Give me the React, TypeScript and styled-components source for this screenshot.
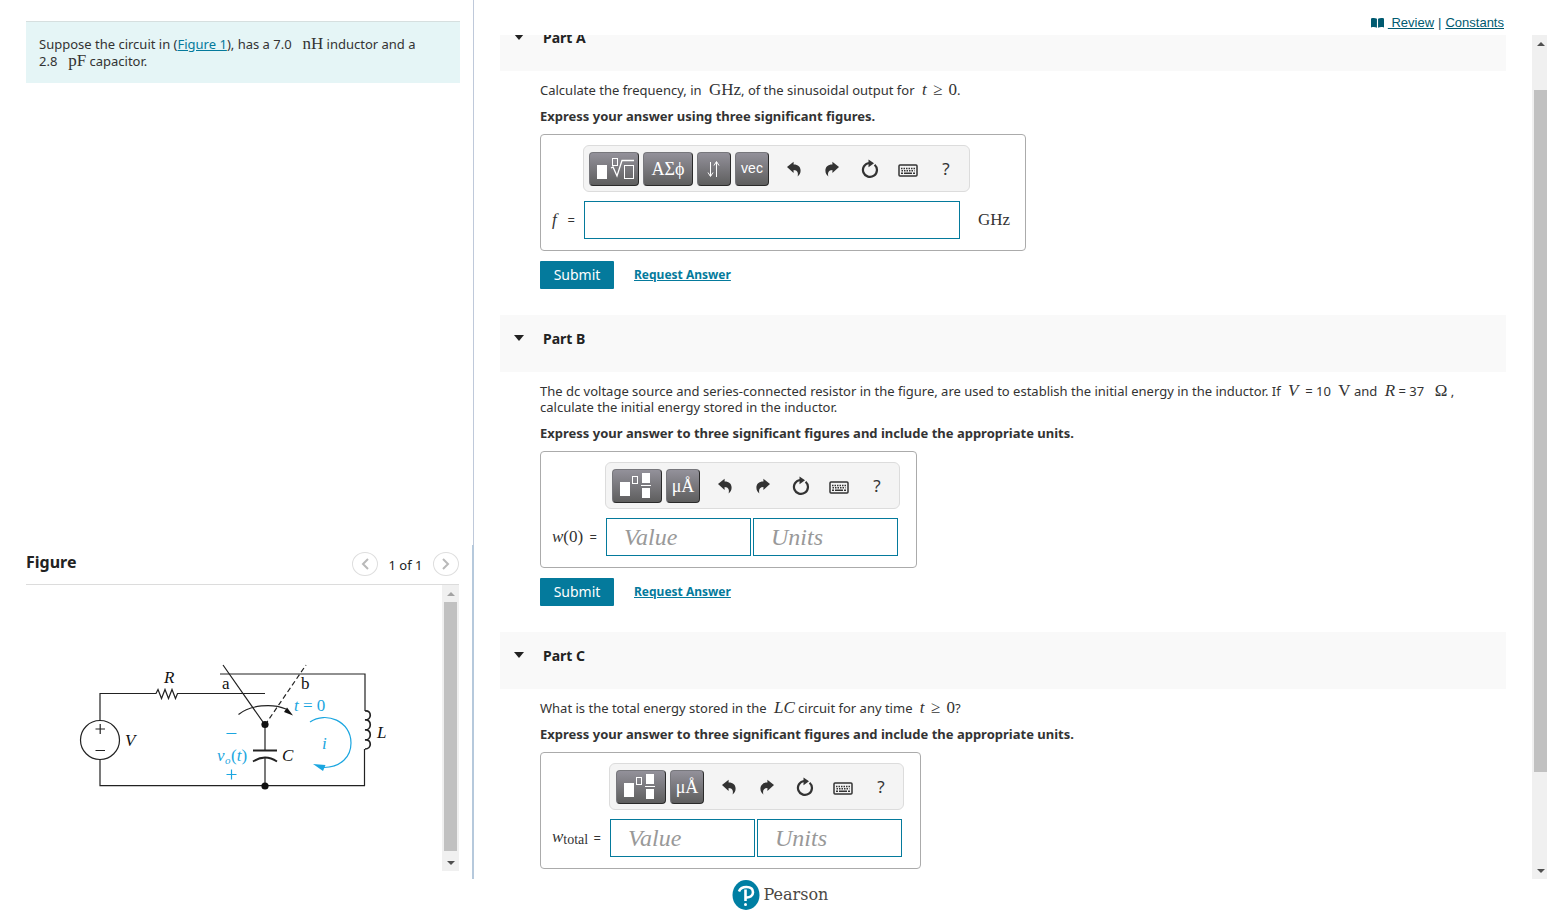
import React from 'react';
import styled, { createGlobalStyle, css } from 'styled-components';

const sans = '"Noto Sans", "Open Sans", sans-serif';
const serif = '"Liberation Serif", "Times New Roman", serif';
const teal = '#047a9c';

const GlobalStyle = createGlobalStyle`
  *, *::before, *::after { box-sizing: border-box; }
  body { margin: 0; background: #fff; color: #333; font: 13px/16px ${sans}; }
  p { margin: 0; }
  button { font-family: inherit; cursor: pointer; }
  a { color: ${teal}; }
`;

const Page = styled.div`
  display: grid;
  grid-template-rows: minmax(0, 1fr) 41px;
  height: 100vh;
  overflow: hidden;
`;

const Columns = styled.div`
  display: grid;
  grid-template-columns: minmax(0, 474fr) minmax(0, 1073fr);
  min-height: 0;
`;

const Sidebar = styled.aside`
  display: flex;
  flex-direction: column;
  min-height: 0;
`;

const Prompt = styled.section`
  flex: 1;
  min-height: 0;
  padding: 21px 13px 0 26px;
  border-right: 1px solid #bfc9da;
`;

const PromptCard = styled.div`
  padding: 14px 13px 13px;
  border-top: 1px solid #d6dfdf;
  background: #e5f5f6;
  line-height: 17px;
`;

const FigurePane = styled.section`
  display: flex;
  flex-direction: column;
  height: 334px;
  padding: 0 13px 8px 26px;
  border-right: 2px solid #b6c9dc;
`;

const FigureBar = styled.header`
  display: flex;
  align-items: center;
  justify-content: space-between;
  height: 40px;
  border-bottom: 1px solid #dcdcdc;
`;

const FigureTitle = styled.h2`
  margin: 0;
  padding-bottom: 6px;
  color: #222;
  font-size: 16px;
  line-height: 20px;
`;

const Pager = styled.nav`
  display: flex;
  align-items: center;
  gap: 10px;
  padding-bottom: 2px;
  color: #222;
  font-size: 13px;

  span {
    min-width: 35px;
    padding-top: 2px;
    text-align: center;
  }
`;

const PagerButton = styled.button`
  display: grid;
  place-items: center;
  width: 26px;
  height: 24px;
  padding: 0;
  border: 1px solid #dedede;
  border-radius: 50%;
  background: #fff;
`;

const FigureBody = styled.div`
  display: flex;
  flex: 1;
  min-height: 0;
`;

const FigureView = styled.div`
  flex: 1;
  min-width: 0;
  overflow: hidden;
  padding: 65px 0 0 34px;
`;

const ScrollTrack = styled.div<{ $clipped?: boolean }>`
  display: flex;
  flex: none;
  flex-direction: column;
  width: ${p => (p.$clipped ? 15 : 17)}px;
  padding: 0 ${p => (p.$clipped ? 0 : 2)}px 0 2px;
  background: #f0f0f0;
`;

const ScrollArrow = styled.span<{ $down?: boolean; $muted?: boolean }>`
  display: grid;
  flex: none;
  place-items: center;
  height: 17px;

  &::before {
    content: '';
    border: 4px solid transparent;
    ${p => p.$down
      ? css`border-top-color: #505050; border-bottom: 0;`
      : css`border-bottom-color: ${p.$muted ? '#a3a3a3' : '#505050'}; border-top: 0;`}
  }
`;

const ScrollThumb = styled.span<{ $before: number; $size: number; $after: number }>`
  display: grid;
  flex: 1;
  grid-template-rows: ${p => `${p.$before}fr ${p.$size}fr ${p.$after}fr`};

  &::before {
    content: '';
    grid-row: 2;
    background: #c1c1c1;
  }
`;

const Main = styled.main`
  display: grid;
  grid-template-rows: 35px minmax(0, 1fr);
  min-height: 0;
`;

const TopLinks = styled.nav`
  display: flex;
  align-items: center;
  justify-content: flex-end;
  gap: 4px;
  padding: 11px 43px 0 0;
  color: #005a70;
  font-family: "Liberation Sans", Arial, sans-serif;

  a { color: inherit; white-space: pre; }
`;

const MainScroller = styled.div`
  display: flex;
  min-height: 0;
`;

const Parts = styled.div`
  flex: 1;
  min-width: 0;
  overflow: hidden;
  padding: 0 26px;
`;

const PartList = styled.div`
  margin-top: -21px;
`;

const PartHeader = styled.header`
  display: flex;
  align-items: center;
  gap: 19px;
  height: 57px;
  padding: 0 14px;
  background: #f9f9f9;

  h2 {
    margin: 0;
    padding-bottom: 10px;
    color: #222;
    font-size: 14px;
    line-height: 18px;
  }
`;

const Toggle = styled.button`
  display: grid;
  place-items: center;
  width: 10px;
  height: 18px;
  margin-bottom: 12px;
  padding: 0;
  border: 0;
  background: none;

  &::before {
    content: '';
    border: 5px solid transparent;
    border-top: 6px solid #222;
    border-bottom: 0;
  }
`;

const PartBody = styled.div`
  display: flex;
  flex-direction: column;
  align-items: flex-start;
  gap: 10px;
  padding: 11px 26px 26px 40px;
`;

const Instruction = styled.p`
  font-weight: 700;
`;

const Math = styled.span<{ $italic?: boolean }>`
  font-family: ${serif};
  font-size: 17px;
  font-style: ${p => (p.$italic ? 'italic' : 'normal')};
  line-height: 0;

  p > & { margin-left: 4px; }

  sub { font-size: 14px; font-style: normal; vertical-align: -2px; line-height: 0; }
`;

const Relation = styled.span`
  margin: 0 2px;
`;

const AnswerBox = styled.div<{ $label: number }>`
  display: inline-grid;
  grid-template-columns: ${p => p.$label}px auto;
  row-gap: 9px;
  padding: 10px 16px 11px 11px;
  border: 1px solid #ababab;
  border-radius: 4px;
`;

const Toolbar = styled.div<{ $inset: number }>`
  display: flex;
  grid-column: 2;
  align-items: center;
  justify-self: start;
  gap: 4px;
  height: 47px;
  padding: 0 ${p => 9 - p.$inset}px 0 ${p => p.$inset}px;
  border: 1px solid #dcdcdc;
  border-radius: 6px;
  background: #f4f4f4;
`;

const KeyButton = styled.button<{ $wide?: boolean }>`
  display: grid;
  place-items: center;
  width: ${p => (p.$wide ? 50 : 34)}px;
  height: 34px;
  padding: 0;
  border: 1px solid #2a2a2a;
  border-top-color: #77777c;
  border-left-color: #77777c;
  border-radius: 4px;
  background: linear-gradient(#93919a, #5e5e5e);
  color: #fff;
  font: 18px/20px ${serif};
`;

const VecText = styled.span`
  padding-bottom: 2px;
  font: 14px/16px "Liberation Sans", Arial, sans-serif;
`;

const IconGroup = styled.div`
  display: flex;
  padding-left: 2px;
`;

const IconButton = styled.button`
  display: grid;
  place-items: center;
  width: 38px;
  height: 34px;
  padding: 0;
  border: 0;
  background: none;
  color: #333;
  font-size: 17px;
  line-height: 20px;
`;

const FieldLabel = styled.label`
  display: flex;
  align-items: center;
  align-self: center;
  justify-content: space-between;
  padding-right: 8px;
  white-space: nowrap;
`;

const Fields = styled.div`
  display: flex;
  align-items: center;
  gap: 2px;
  padding-left: 1px;
`;

const Field = styled.input<{ $width: number }>`
  width: ${p => p.$width}px;
  height: 38px;
  padding: 0 17px;
  border: 1px solid ${teal};
  border-radius: 0;
  background: #fff;
  color: #333;
  font: italic 24px/28px ${serif};

  &::placeholder { color: #999; opacity: 1; }
`;

const Unit = styled.span`
  width: 47px;
  padding-left: 16px;
`;

const Actions = styled.div`
  display: flex;
  align-items: center;
  gap: 20px;

  a { font-size: 12px; font-weight: 700; }
`;

const Submit = styled.button`
  width: 74px;
  height: 28px;
  padding: 0;
  border: 0;
  border-radius: 1px;
  background: ${teal};
  color: #fff;
  font-size: 14px;
  line-height: 20px;
`;

const Footer = styled.footer`
  display: flex;
  align-items: center;
  justify-content: center;
  gap: 4px;
  padding: 0 0 9px 13px;
  color: #4b4844;
  font: 16px/22px "DejaVu Serif", serif;
`;

const Chevron = ({ right }: { right?: boolean }) => (
  <svg width="10" height="12" viewBox="0 0 10 12" fill="none" stroke="#b9b9b9" strokeWidth="2">
    <path d={right ? 'M2 1l5 5-5 5' : 'M8 1L3 6l5 5'} />
  </svg>
);

const CurvedArrow = ({ redo }: { redo?: boolean }) => (
  <svg width="14" height="16" viewBox="0 0 14 16" fill="#333">
    <g transform={redo ? 'matrix(-1 0 0 1 14 0)' : undefined}>
      <path d="M0 6L6.6.8v2.8c4.600 0 7 2.400 7 6.200 0 2.300-1.200 4.300-3 5.800 1-3.400 0-6.400-4-6.500v3z" />
    </g>
  </svg>
);

const ResetIcon = () => (
  <svg width="18" height="20" viewBox="0 0 18 20" fill="none">
    <path d="M13.600 5.700A7 7 0 1 1 8 4" stroke="#333" strokeWidth="2.200" />
    <path d="M7.500.5L13 4.200 7.500 8.200z" fill="#333" />
  </svg>
);

const KeyboardIcon = () => (
  <svg width="20" height="18" viewBox="0 0 20 18" fill="none" stroke="#333">
    <rect x="1" y="5" width="18" height="11" rx="1" strokeWidth="1.500" />
    <path d="M3 8.500h14M3.500 10.800h13" strokeWidth="1.500" strokeDasharray="1.500 1" />
    <path d="M3 13.300h2m1 0h8m1 0h2" strokeWidth="1.500" />
  </svg>
);

const RootIcon = () => (
  <svg width="48" height="32" viewBox="0 0 48 32" fill="none" stroke="#fff">
    <path d="M7 12h10v14H7z" fill="#fff" stroke="none" />
    <rect x="22.500" y="5.500" width="5" height="7" />
    <path d="M21 15l2-1 4 9 5-15.500h12" strokeWidth="1.300" />
    <rect x="34.500" y="12.500" width="9" height="13" />
  </svg>
);

const FractionIcon = () => (
  <svg width="48" height="32" viewBox="0 0 48 32" fill="#fff">
    <path d="M7 12h10v14H7zM29 3h8v10h-8zM29 18h8v10h-8zM28 15h10v1H28z" />
    <rect x="19.500" y="6.500" width="5" height="7" fill="none" stroke="#fff" />
  </svg>
);

const ArrowsIcon = () => (
  <svg width="16" height="20" viewBox="0 0 16 20" fill="none" stroke="#fff">
    <path d="M4.500 3v14M2 13.500l2.500 4 2.500-4M10.500 18V3M8 6.500l2.500-4 2.500 4" />
  </svg>
);

const BookIcon = () => (
  <svg width="13" height="10" viewBox="0 0 14 10" preserveAspectRatio="none" fill="#005a70">
    <path d="M0 .5C2.200-.2 4.500-.1 6.400.7v9C4.500 8.900 2.200 8.800 0 9.500zM14 .5C11.800-.2 9.500-.1 7.600.7v9c1.900-.8 4.200-.9 6.400-.2z" />
  </svg>
);

const PearsonMark = () => (
  <svg width="28" height="30" viewBox="0 0 28 30" fill="none">
    <ellipse cx="14" cy="15" rx="13.500" ry="15" fill="#007fa3" />
    <path d="M7 11.500C8 8.500 10.500 7 14.500 7c4 0 6.500 2 6.500 5.200 0 3.500-3 5.700-7 5.300M13.500 9.500v11.500" stroke="#fff" strokeWidth="2.600" />
    <circle cx="13.500" cy="24.500" r="1.500" fill="#fff" />
  </svg>
);

const DiagramText = styled.text<{ $italic?: boolean; $blue?: boolean; $small?: boolean }>`
  fill: ${p => (p.$blue ? '#1ba6e0' : '#111')};
  font-family: ${serif};
  font-size: ${p => (p.$small ? 11 : 17)}px;
  font-style: ${p => (p.$italic ? 'italic' : 'normal')};
`;

const Circuit = () => (
  <svg width="350" height="150" viewBox="60 650 350 150" role="img" aria-label="Switched LC circuit">
    <g fill="none" stroke="#222" strokeWidth="1.200">
      <circle cx="100" cy="740" r="19.500" />
      <path d="M100 720.500V693.500H156l2-4 3.500 9 3.500-9 3.500 9 3.500-9 3.500 9 2-5H265" />
      <path d="M100 759.500V785.700H364.500V749" />
      <path d="M220 674H365V711" />
      <path d="M365 711c7-1 7 9 0 9 7-1 7 10 0 10 7-1 7 10 0 10 7-1 7 9 0 9" strokeWidth="1.700" />
      <path d="M223 665L265 725V750.500M265 757.500V786" />
      <path d="M265 725L306 665" strokeDasharray="5 3" />
      <path d="M238.500 714.500C250 705 272 703 286 709" />
      <path d="M95.500 729H105M100.200 724V734M95.500 750.500H105" />
      <path d="M253 750.500H277M253 761.500Q265 753.500 277 761.500" strokeWidth="1.800" />
    </g>
    <g fill="#111">
      <circle cx="265" cy="724.500" r="3.600" />
      <circle cx="265" cy="786" r="3.600" />
      <path d="M293 715.500L284 712 287 707.500z" />
    </g>
    <g fill="none" stroke="#1ba6e0" strokeWidth="1.200">
      <path d="M310 722C326 711 351 721 351 743 351 757 341 767 324 767.500" />
      <path d="M226.500 733.500H236.500M226.500 774.500H236.500M231.500 769.500V779.500" />
    </g>
    <path d="M313 764L325.500 765 323 771z" fill="#1ba6e0" />
    <DiagramText x="164" y="683" $italic>R</DiagramText>
    <DiagramText x="125" y="746" $italic>V</DiagramText>
    <DiagramText x="222" y="689">a</DiagramText>
    <DiagramText x="301" y="689">b</DiagramText>
    <DiagramText x="282" y="761" $italic>C</DiagramText>
    <DiagramText x="377" y="738" $italic>L</DiagramText>
    <DiagramText x="322" y="749" $italic $blue>i</DiagramText>
    <DiagramText x="294" y="711" $blue><tspan fontStyle="italic">t</tspan> = 0</DiagramText>
    <DiagramText x="217" y="761" $italic $blue>v</DiagramText>
    <DiagramText x="225" y="764" $italic $blue $small>o</DiagramText>
    <DiagramText x="231" y="761" $blue>(<tspan fontStyle="italic">t</tspan>)</DiagramText>
  </svg>
);

const EditIcons = () => (
  <IconGroup>
    <IconButton type="button" aria-label="Undo"><CurvedArrow /></IconButton>
    <IconButton type="button" aria-label="Redo"><CurvedArrow redo /></IconButton>
    <IconButton type="button" aria-label="Reset"><ResetIcon /></IconButton>
    <IconButton type="button" aria-label="Keyboard shortcuts"><KeyboardIcon /></IconButton>
    <IconButton type="button" aria-label="Help">?</IconButton>
  </IconGroup>
);

const PartActions = () => (
  <Actions>
    <Submit type="submit">Submit</Submit>
    <a href="#request">Request Answer</a>
  </Actions>
);

const Part = ({ name, children }: { name: string; children: React.ReactNode }) => (
  <section>
    <PartHeader>
      <Toggle type="button" aria-label={`Collapse ${name}`} />
      <h2>{name}</h2>
    </PartHeader>
    <PartBody>{children}</PartBody>
  </section>
);

const AfterZero = () => (
  <Math><i>t</i> <Relation>≥</Relation> 0</Math>
);

const ValueUnitsAnswer = ({ id, labelWidth, label }: { id: string; labelWidth: number; label: React.ReactNode }) => (
  <AnswerBox $label={labelWidth}>
    <Toolbar $inset={6}>
      <KeyButton type="button" $wide aria-label="Templates"><FractionIcon /></KeyButton>
      <KeyButton type="button">μÅ</KeyButton>
      <EditIcons />
    </Toolbar>
    <FieldLabel htmlFor={id}>{label}<span>=</span></FieldLabel>
    <Fields>
      <Field id={id} $width={145} placeholder="Value" />
      <Field $width={145} placeholder="Units" aria-label="Units" />
    </Fields>
  </AnswerBox>
);

export default function App() {
  return (
    <>
      <GlobalStyle />
      <Page>
        <Columns>
          <Sidebar>
            <Prompt>
              <PromptCard>
                <p>
                  Suppose the circuit in (<a href="#figure">Figure 1</a>), has a 7.0 &nbsp;<Math>nH</Math> inductor
                  and a
                  <br />
                  2.8 &nbsp;<Math>pF</Math> capacitor.
                </p>
              </PromptCard>
            </Prompt>
            <FigurePane id="figure">
              <FigureBar>
                <FigureTitle>Figure</FigureTitle>
                <Pager>
                  <PagerButton type="button" aria-label="Previous"><Chevron /></PagerButton>
                  <span>1 of 1</span>
                  <PagerButton type="button" aria-label="Next"><Chevron right /></PagerButton>
                </Pager>
              </FigureBar>
              <FigureBody>
                <FigureView><Circuit /></FigureView>
                <ScrollTrack aria-hidden>
                  <ScrollArrow $muted />
                  <ScrollThumb $before={0} $size={249} $after={3} />
                  <ScrollArrow $down />
                </ScrollTrack>
              </FigureBody>
            </FigurePane>
          </Sidebar>

          <Main>
            <TopLinks>
              <BookIcon />
              <a href="#review"> Review</a>
              <span>|</span>
              <a href="#constants">Constants</a>
            </TopLinks>
            <MainScroller>
              <Parts>
                <PartList>
                  <Part name="Part A">
                    <p>
                      Calculate the frequency, in <Math>GHz</Math>, of the sinusoidal output for <AfterZero />.
                    </p>
                    <Instruction>Express your answer using three significant figures.</Instruction>
                    <AnswerBox $label={31}>
                      <Toolbar $inset={5}>
                        <KeyButton type="button" $wide aria-label="Templates"><RootIcon /></KeyButton>
                        <KeyButton type="button" $wide>ΑΣϕ</KeyButton>
                        <KeyButton type="button" aria-label="Arrows"><ArrowsIcon /></KeyButton>
                        <KeyButton type="button"><VecText>vec</VecText></KeyButton>
                        <EditIcons />
                      </Toolbar>
                      <FieldLabel htmlFor="frequency"><Math $italic>f</Math><span>=</span></FieldLabel>
                      <Fields>
                        <Field id="frequency" $width={376} />
                        <Unit><Math>GHz</Math></Unit>
                      </Fields>
                    </AnswerBox>
                    <PartActions />
                  </Part>

                  <Part name="Part B">
                    <p>
                      The dc voltage source and series-connected resistor in the figure, are used to establish the
                      initial energy in the inductor. If <Math $italic>V</Math> &nbsp;= 10 <Math>V</Math> and{' '}
                      <Math $italic>R</Math> = 37 &nbsp;<Math>Ω</Math> ,<br />
                      calculate the initial energy stored in the inductor.
                    </p>
                    <Instruction>
                      Express your answer to three significant figures and include the appropriate units.
                    </Instruction>
                    <ValueUnitsAnswer id="initial" labelWidth={53} label={<Math><i>w</i>(0)</Math>} />
                    <PartActions />
                  </Part>

                  <Part name="Part C">
                    <p>
                      What is the total energy stored in the <Math $italic>LC</Math> circuit for any time{' '}
                      <AfterZero />?
                    </p>
                    <Instruction>
                      Express your answer to three significant figures and include the appropriate units.
                    </Instruction>
                    <ValueUnitsAnswer id="total" labelWidth={57} label={<Math $italic>w<sub>total</sub></Math>} />
                  </Part>
                </PartList>
              </Parts>
              <ScrollTrack $clipped aria-hidden>
                <ScrollArrow />
                <ScrollThumb $before={38} $size={682} $after={90} />
                <ScrollArrow $down />
              </ScrollTrack>
            </MainScroller>
          </Main>
        </Columns>
        <Footer>
          <PearsonMark />
          <span>Pearson</span>
        </Footer>
      </Page>
    </>
  );
}
